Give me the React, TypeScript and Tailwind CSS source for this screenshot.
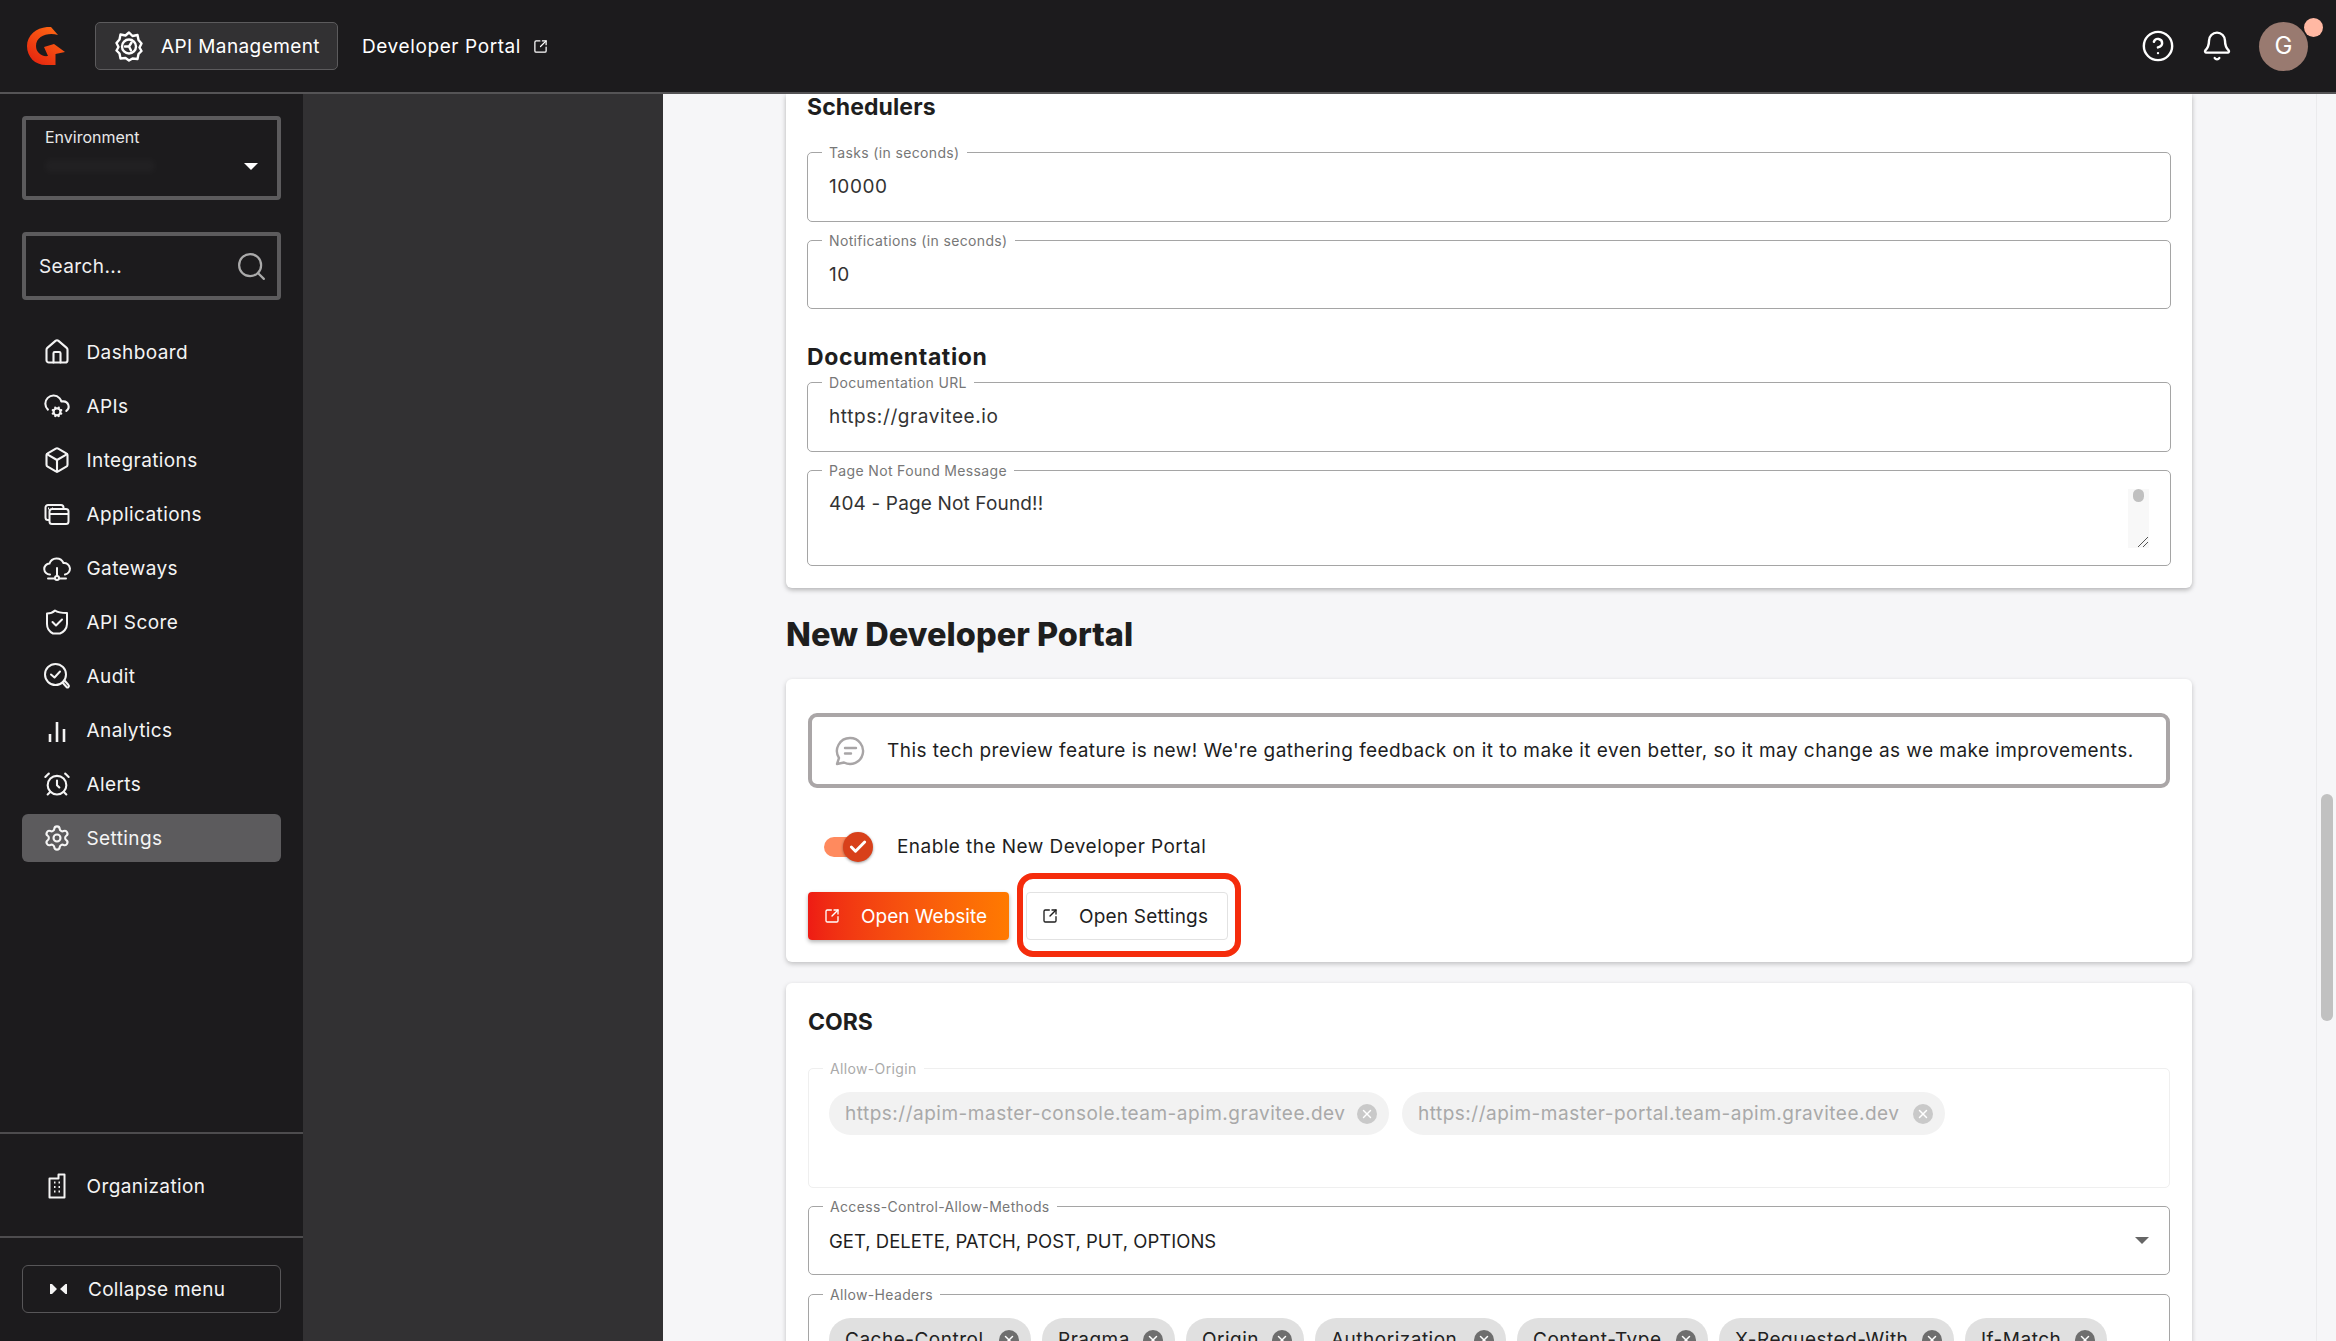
import { ReactNode } from 'react';
import {
  Home,
  CloudCog,
  Box,
  AlarmClock,
  Settings,
  Search,
  CircleHelp,
  Bell,
  SquareArrowOutUpRight,
  Check,
  X,
} from 'lucide-react';

/* ─── Small drawings ─────────────────────────────────────────────────────────── */
function Logo() {
  return (
    <svg width="38" height="38" viewBox="0 0 38 38">
      <defs>
        <linearGradient id="logoGrad" x1="0.1" y1="1" x2="0.8" y2="0">
          <stop offset="0" stopColor="#e4210f" />
          <stop offset="1" stopColor="#ff6a14" />
        </linearGradient>
      </defs>
      <path
        d="M24 0C12-1 0 7 0 19 0 30 8 38 19 38H28.500V27L38 25 27 17 17 20 21 29C14 30 9 25 9 19 9 9 21 5 31 8Z"
        fill="url(#logoGrad)"
      />
    </svg>
  );
}

function ApplicationsIcon() {
  return (
    <svg width="28" height="28" viewBox="0 0 28 28" fill="none" stroke="currentColor" strokeWidth="2" strokeLinejoin="round">
      <path d="M6 20H5a2.500 2.500 0 0 1-2.500-2.500v-10A2.500 2.500 0 0 1 5 5h13a2.500 2.500 0 0 1 2.500 2.500V9" />
      <rect x="6.500" y="9" width="19" height="15" rx="2.500" />
      <path d="M6.500 14h19M5 8.500h1M9 8.500h1" />
    </svg>
  );
}

function GatewaysIcon() {
  return (
    <svg width="28" height="28" viewBox="0 0 28 28" fill="none" stroke="currentColor" strokeWidth="2" strokeLinecap="round">
      <path d="M7 20.500a5.500 5.500 0 0 1-.500-11A7.500 7.500 0 0 1 20.500 9a5.800 5.800 0 0 1 1.500 11.500" />
      <path d="M14 14v7M5 24.500h6.500M16.500 24.500H23" />
      <circle cx="14" cy="24" r="2" />
    </svg>
  );
}

function ShieldIcon() {
  return (
    <svg width="28" height="28" viewBox="0 0 28 28" fill="none" stroke="currentColor" strokeWidth="2" strokeLinecap="round" strokeLinejoin="round">
      <path d="M4 5.500C8 5.500 10 4.500 12 2.500h0C14 4 19 5 24 5v11c0 5-4 8.500-7 9.500H10C7 24 4 21 4 16Z" />
      <path d="m9.500 14 3.500 3.500 6-6" />
    </svg>
  );
}

function AuditIcon() {
  return (
    <svg width="28" height="28" viewBox="0 0 28 28" fill="none" stroke="currentColor" strokeWidth="2" strokeLinecap="round" strokeLinejoin="round">
      <circle cx="12.500" cy="12.500" r="10.500" />
      <path d="m8 12.500 3.500 3 5.500-6" />
      <path d="m19.500 20.500 2-2 4 4.500a1.400 1.400 0 0 1-2 2Z" />
    </svg>
  );
}

function AnalyticsIcon() {
  return (
    <svg width="28" height="28" viewBox="0 0 28 28" fill="none" stroke="currentColor" strokeWidth="2.600">
      <path d="M7 26v-8M14 26V6M21 26V13" />
    </svg>
  );
}

function OrganizationIcon() {
  return (
    <svg width="28" height="28" viewBox="0 0 28 28" fill="none" stroke="currentColor" strokeWidth="2" strokeLinejoin="round">
      <path d="M6.500 6.500h9V2.500h6V25.500h-15Z" />
      <path d="M11 10.500h1.500M15.500 10.500h1.500M11 15h1.500M15.500 15h1.500M11 19.500h1.500M15.500 19.500h1.500" />
    </svg>
  );
}

function CollapseIcon() {
  return (
    <svg width="19" height="12" viewBox="0 0 19 12" fill="currentColor">
      <path d="M1 1h2l5 5-5 5H1ZM18 1h-1.500L11 6l5.500 5H18Z" />
    </svg>
  );
}

function CommentIcon() {
  return (
    <svg width="30" height="30" viewBox="0 0 30 30" fill="none" stroke="#a8a5a6" strokeWidth="2.400" strokeLinecap="round" strokeLinejoin="round">
      <path d="M15 2a13 13 0 1 1-6 24.500L2 28l2-6A13 13 0 0 1 15 2Z" />
      <path d="M10 12h11M10 17.500h6" />
    </svg>
  );
}

function GearBadge() {
  return (
    <svg width="28" height="31" viewBox="0 0 28 31" fill="none" stroke="#fff" strokeWidth="2.400" strokeLinejoin="round" strokeLinecap="round">
      <path d="M14 1.500l3.500 3.500 5-1 1 5 3 3.500-2 4 2 3.500-3 3-1 5-5-.500L14 29.500l-3.500-2.500-5 .500-1-5-3-3 2-3.500-2-4 3-3.500 1-5 5 1Z" />
      <circle cx="14" cy="15.500" r="7" />
      <path d="M14 15.500l2.500-4M14 15.500h-4M14 15.500l2 4" />
    </svg>
  );
}

/* ─── Sidebar ────────────────────────────────────────────────────────────────── */
const NAV_ITEMS: { label: string; icon: ReactNode }[] = [
  { label: 'Dashboard', icon: <Home size={28} strokeWidth={1.8} /> },
  { label: 'APIs', icon: <CloudCog size={28} strokeWidth={1.8} /> },
  { label: 'Integrations', icon: <Box size={28} strokeWidth={1.8} /> },
  { label: 'Applications', icon: <ApplicationsIcon /> },
  { label: 'Gateways', icon: <GatewaysIcon /> },
  { label: 'API Score', icon: <ShieldIcon /> },
  { label: 'Audit', icon: <AuditIcon /> },
  { label: 'Analytics', icon: <AnalyticsIcon /> },
  { label: 'Alerts', icon: <AlarmClock size={28} strokeWidth={1.8} /> },
  { label: 'Settings', icon: <Settings size={28} strokeWidth={1.8} /> },
];

function NavItem({ label, icon, active }: { label: string; icon: ReactNode; active?: boolean }) {
  return (
    <div className={`flex h-[48px] items-center rounded-[6px] pl-[21px] text-[19px] tracking-[0.4px] text-[#f4f4f4] ${active ? 'bg-[#5c5b5d]' : ''}`}>
      <span className="flex w-[28px] justify-center">{icon}</span>
      <span className="ml-[15.500px] pt-[2px]">{label}</span>
    </div>
  );
}

function Sidebar() {
  return (
    <aside className="flex h-full w-[303px] shrink-0 flex-col bg-[#1c1b1d]">
      <div className="mx-[22px] mt-[22px] flex h-[84px] flex-col rounded-[4px] border-[4px] border-[#5c5b5d] pl-[19px] pr-[19px]">
        <span className="mt-[7px] text-[16px] leading-[20px] text-[#e8e8e8]">Environment</span>
        <div className="mt-[12px] flex items-center justify-between">
          <span className="h-[14px] w-[110px] rounded-[4px] bg-white/[0.025] blur-[3px]" />
          <span className="h-0 w-0 border-x-[7px] border-t-[7px] border-x-transparent border-t-white" />
        </div>
      </div>
      <div className="mx-[22px] mt-[32px] flex h-[68px] items-center justify-between rounded-[4px] border-[4px] border-[#5c5b5d] pl-[13px] pr-[9px]">
        <span className="pt-[3px] text-[19px] tracking-[0.4px] text-[#f0f0f0]">Search...</span>
        <Search size={33} strokeWidth={1.6} className="text-[#aaaaaa]" />
      </div>
      <nav className="mx-[22px] mt-[28px] flex flex-col gap-[6px]">
        {NAV_ITEMS.map((item) => (
          <NavItem key={item.label} label={item.label} icon={item.icon} active={item.label === 'Settings'} />
        ))}
      </nav>
      <div className="mt-auto h-[2px] bg-[#4d4c4e]" />
      <div className="mx-[22px] h-[102px] pb-[26px] pt-[28px]">
        <NavItem label="Organization" icon={<OrganizationIcon />} />
      </div>
      <div className="h-[2px] bg-[#4d4c4e]" />
      <div className="mx-[22px] mb-[28px] mt-[27px] flex h-[48px] items-center rounded-[6px] border-[1.5px] border-[#575658] pl-[26px] text-[19px] tracking-[0.3px] text-[#f4f4f4]">
        <CollapseIcon />
        <span className="ml-[20px] pt-[3px]">Collapse menu</span>
      </div>
    </aside>
  );
}

/* ─── Form bits ──────────────────────────────────────────────────────────────── */
function Field({ label, className, disabled, children }: { label: string; className: string; disabled?: boolean; children: ReactNode }) {
  return (
    <div className={`relative rounded-[5px] border-[1.5px] ${disabled ? 'border-[#efefef]' : 'border-[#a5a5a5]'} ${className}`}>
      <span className={`absolute left-[14px] top-[-9px] bg-white px-[7px] text-[14px] leading-[18px] tracking-[0.35px] ${disabled ? 'text-[#aaaaaa]' : 'text-[#777777]'}`}>
        {label}
      </span>
      {children}
    </div>
  );
}

function ValueField({ label, value }: { label: string; value: string }) {
  return (
    <Field label={label} className="flex h-[69.500px] items-center pl-[21px] text-[19px] tracking-[0.6px] text-[#333333]">
      <span className="pt-[1px]">{value}</span>
    </Field>
  );
}

function Chip({ label, width, disabled }: { label: string; width: string; disabled?: boolean }) {
  return (
    <div className={`flex h-[43px] shrink-0 items-center justify-between rounded-full pl-[16px] pr-[12px] text-[19px] ${width} ${disabled ? 'bg-[#f2f2f2] text-[#a9a9a9]' : 'bg-[#e0e0e0] text-[#222222]'}`}>
      <span className="pt-[2px] tracking-[0.5px]">{label}</span>
      <span className={`flex size-[20px] items-center justify-center rounded-full ${disabled ? 'bg-[#c9c9c9]' : 'bg-[#6e6e6e]'}`}>
        <X size={14} strokeWidth={2.5} className="text-white" />
      </span>
    </div>
  );
}

const HEADER_CHIPS = [
  { label: 'Cache-Control', width: 'w-[202px]' },
  { label: 'Pragma', width: 'w-[133px]' },
  { label: 'Origin', width: 'w-[118px]' },
  { label: 'Authorization', width: 'w-[191px]' },
  { label: 'Content-Type', width: 'w-[191px]' },
  { label: 'X-Requested-With', width: 'w-[235px]' },
  { label: 'If-Match', width: 'w-[142px]' },
];

/* ─── Main column ────────────────────────────────────────────────────────────── */
function Content() {
  return (
    <div className="ml-[123px] w-[1406px] shrink-0 text-[#1e1e1e]">
      {/* Settings card, scrolled under the top bar */}
      <section className="rounded-b-[6px] bg-white px-[21px] pb-[22.500px] shadow-[0_2px_5px_rgba(0,0,0,0.28)]">
        <h2 className="text-[23px] font-bold leading-[26px] tracking-[0.1px]">Schedulers</h2>
        <div className="mt-[32px] flex flex-col gap-[18px]">
          <ValueField label="Tasks (in seconds)" value="10000" />
          <ValueField label="Notifications (in seconds)" value="10" />
        </div>
        <h2 className="mt-[35px] text-[23px] font-bold leading-[26px] tracking-[0.6px]">Documentation</h2>
        <div className="mt-[12px] flex flex-col gap-[18px]">
          <ValueField label="Documentation URL" value="https://gravitee.io" />
          <Field label="Page Not Found Message" className="h-[96px] pl-[21px] pt-[20px] text-[19px] leading-[26px] tracking-[0.15px] text-[#333333]">
            404 - Page Not Found!!
            <div className="absolute right-[21px] top-[18px] flex h-[59px] w-[21px] flex-col items-center bg-[#f8f8f8]">
              <span className="h-[13px] w-[11px] rounded-full bg-[#c0c0c0]" />
              <svg className="mt-auto" width="21" height="20" viewBox="0 0 21 20" stroke="#555" fill="none">
                <path d="M10 19 20 9M15 19l5-5" />
              </svg>
            </div>
          </Field>
        </div>
      </section>

      <h1 className="mt-[26px] pt-[1px] text-[32.500px] font-extrabold leading-[40px]">New Developer Portal</h1>

      {/* Developer portal card */}
      <section className="mt-[24px] rounded-[6px] bg-white px-[22px] pb-[22px] pt-[34px] shadow-[0_2px_5px_rgba(0,0,0,0.22)]">
        <div className="flex h-[75px] items-center rounded-[9px] border-[4px] border-[#aaa6a7] pl-[23px] text-[19px] tracking-[0.44px]">
          <CommentIcon />
          <span className="ml-[22px] pt-[2px]">
            This tech preview feature is new! We're gathering feedback on it to make it even better, so it may change as we make improvements.
          </span>
        </div>
        <div className="mt-[44px] flex h-[30px] items-center pl-[16px]">
          <div className="relative h-[20px] w-[44px] rounded-full bg-[#ff8a5e]">
            <span className="absolute right-[-5px] top-[-5px] flex size-[30px] items-center justify-center rounded-full bg-[#d8401a] shadow-[0_1px_3px_rgba(0,0,0,0.4)]">
              <Check size={20} strokeWidth={3.5} className="text-white" />
            </span>
          </div>
          <span className="ml-[29px] text-[19px] tracking-[0.45px]">Enable the New Developer Portal</span>
        </div>
        <div className="relative mt-[30px] flex gap-[17px]">
          <button className="flex h-[48px] w-[201px] items-center rounded-[4px] bg-gradient-to-r from-[#ee1b14] to-[#ff7a00] pl-[16px] text-[19px] text-white shadow-[0_2px_4px_rgba(0,0,0,0.3)]">
            <SquareArrowOutUpRight size={16} strokeWidth={2} />
            <span className="ml-[21px] pt-[2px]">Open Website</span>
          </button>
          <button className="flex h-[48px] w-[202px] items-center rounded-[4px] border-[1.5px] border-[#e2e2e2] bg-white pl-[15px] text-[19px] tracking-[0.2px]">
            <SquareArrowOutUpRight size={16} strokeWidth={2} />
            <span className="ml-[21px] pt-[2px]">Open Settings</span>
          </button>
          <div className="absolute left-[209px] top-[-19px] h-[84px] w-[224px] rounded-[16px] border-[6px] border-[#f52c0c]" />
        </div>
      </section>

      {/* CORS card */}
      <section className="mt-[21px] rounded-t-[6px] bg-white px-[22px] pt-[26px] shadow-[0_2px_5px_rgba(0,0,0,0.22)]">
        <h2 className="text-[23px] font-bold leading-[26px]">CORS</h2>
        <Field label="Allow-Origin" disabled className="mt-[33px] flex h-[120px] items-start gap-[13px] pl-[20px] pt-[23px]">
          <Chip label="https://apim-master-console.team-apim.gravitee.dev" width="w-[560px]" disabled />
          <Chip label="https://apim-master-portal.team-apim.gravitee.dev" width="w-[543px]" disabled />
        </Field>
        <Field label="Access-Control-Allow-Methods" className="mt-[18px] flex h-[69px] items-center justify-between pl-[20px] pr-[20px] text-[18.500px]">
          <span className="pt-[2px]">GET, DELETE, PATCH, POST, PUT, OPTIONS</span>
          <span className="h-0 w-0 border-x-[7px] border-t-[7px] border-x-transparent border-t-[#666666]" />
        </Field>
        <Field label="Allow-Headers" className="mt-[19px] flex h-[120px] items-start gap-[11px] pl-[20px] pt-[23px]">
          {HEADER_CHIPS.map((chip) => (
            <Chip key={chip.label} label={chip.label} width={chip.width} />
          ))}
        </Field>
      </section>
    </div>
  );
}

/* ─── Page ───────────────────────────────────────────────────────────────────── */
export default function App() {
  return (
    <div className="flex h-[1341px] w-[2336px] flex-col overflow-hidden font-['Inter',sans-serif]">
      <header className="flex h-[94px] shrink-0 items-center border-b-[2px] border-[#555456] bg-[#1c1b1d] text-white">
        <div className="ml-[27px] flex">
          <Logo />
        </div>
        <div className="ml-[30px] flex h-[48px] w-[243px] items-center rounded-[5px] border-[1.5px] border-[#5c5b5d] bg-[#323133] pl-[19px] text-[19px] tracking-[0.4px]">
          <GearBadge />
          <span className="ml-[18px] pt-[2px]">API Management</span>
        </div>
        <span className="ml-[24px] pt-[2px] text-[19px] tracking-[0.6px]">Developer Portal</span>
        <SquareArrowOutUpRight size={15} strokeWidth={2} className="ml-[12px]" />
        <CircleHelp size={34} strokeWidth={1.7} className="ml-auto" />
        <Bell size={32} strokeWidth={1.8} className="ml-[26px]" />
        <div className="relative ml-[26px] mr-[28px] flex size-[49px] items-center justify-center rounded-full bg-[#997a70] text-[24px]">
          G
          <span className="absolute right-[-15px] top-[-4px] size-[19px] rounded-full bg-[#ffb8a3]" />
        </div>
      </header>
      <div className="flex min-h-0 flex-1">
        <Sidebar />
        <div className="w-[360px] shrink-0 bg-[#323133]" />
        <main className="flex min-w-0 flex-1 overflow-hidden bg-[#f6f6f8]">
          <Content />
          <div className="ml-auto w-[20px] shrink-0 border-l-[1.5px] border-[#ebebed] pl-[4px] pt-[700px]">
            <div className="h-[227px] w-[12px] rounded-full bg-[#c1c1c1]" />
          </div>
        </main>
      </div>
    </div>
  );
}
